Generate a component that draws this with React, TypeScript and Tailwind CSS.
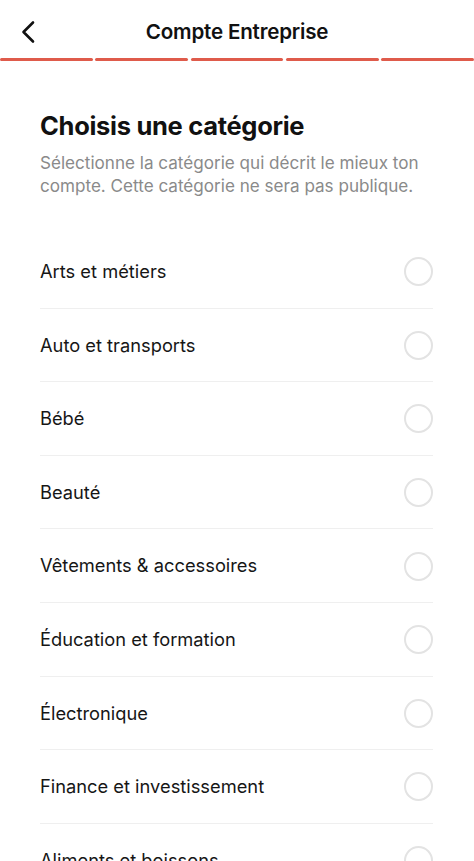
import React from "react";

const items = [
  "Arts et métiers",
  "Auto et transports",
  "Bébé",
  "Beauté",
  "Vêtements & accessoires",
  "Éducation et formation",
  "Électronique",
  "Finance et investissement",
  "Aliments et boissons",
  "Jeux",
];

export default function App() {
  return (
    <div
      className="w-[474px] h-[861px] overflow-hidden bg-white text-[#161616]"
      style={{ fontFamily: "Inter, 'Noto Sans', sans-serif" }}
    >
      <div className="grid grid-cols-[60px_1fr_60px] items-center h-[58px] pt-[6px]">
        <div className="pl-[20px] flex items-center">
          <svg width="16" height="24" viewBox="0 0 16 24" fill="none">
            <path d="M13 2.5 L3.5 12 L13 21.5" stroke="#111" strokeWidth="2.6" strokeLinecap="round" strokeLinejoin="round" />
          </svg>
        </div>
        <div className="text-center text-[20.6px] font-semibold tracking-[-0.2px] text-[#111]">
          Compte Entreprise
        </div>
        <div />
      </div>
      <div className="flex gap-[2.5px] h-[3px]">
        {[0, 1, 2, 3, 4].map((i) => (
          <div key={i} className="flex-1 bg-[#df5b4b] rounded-full" />
        ))}
      </div>
      <div className="pl-10 pr-[41px]">
        <h1 className="mt-[50px] text-[25.5px] leading-[30px] font-bold tracking-[-0.3px] text-[#111]">
          Choisis une catégorie
        </h1>
        <p className="mt-[10px] text-[17.1px] leading-[23px] text-[#8a8a8a]">
          Sélectionne la catégorie qui décrit le mieux ton compte. Cette catégorie ne sera pas publique.
        </p>
        <ul className="mt-[38px]">
          {items.map((it) => (
            <li
              key={it}
              className="h-[73.6px] flex items-center justify-between border-b border-[#efefef] pt-[1px]"
            >
              <span className="text-[18.3px]">{it}</span>
              <span className="w-[29px] h-[29px] rounded-full border-2 border-[#e3e3e3]" />
            </li>
          ))}
        </ul>
      </div>
    </div>
  );
}
